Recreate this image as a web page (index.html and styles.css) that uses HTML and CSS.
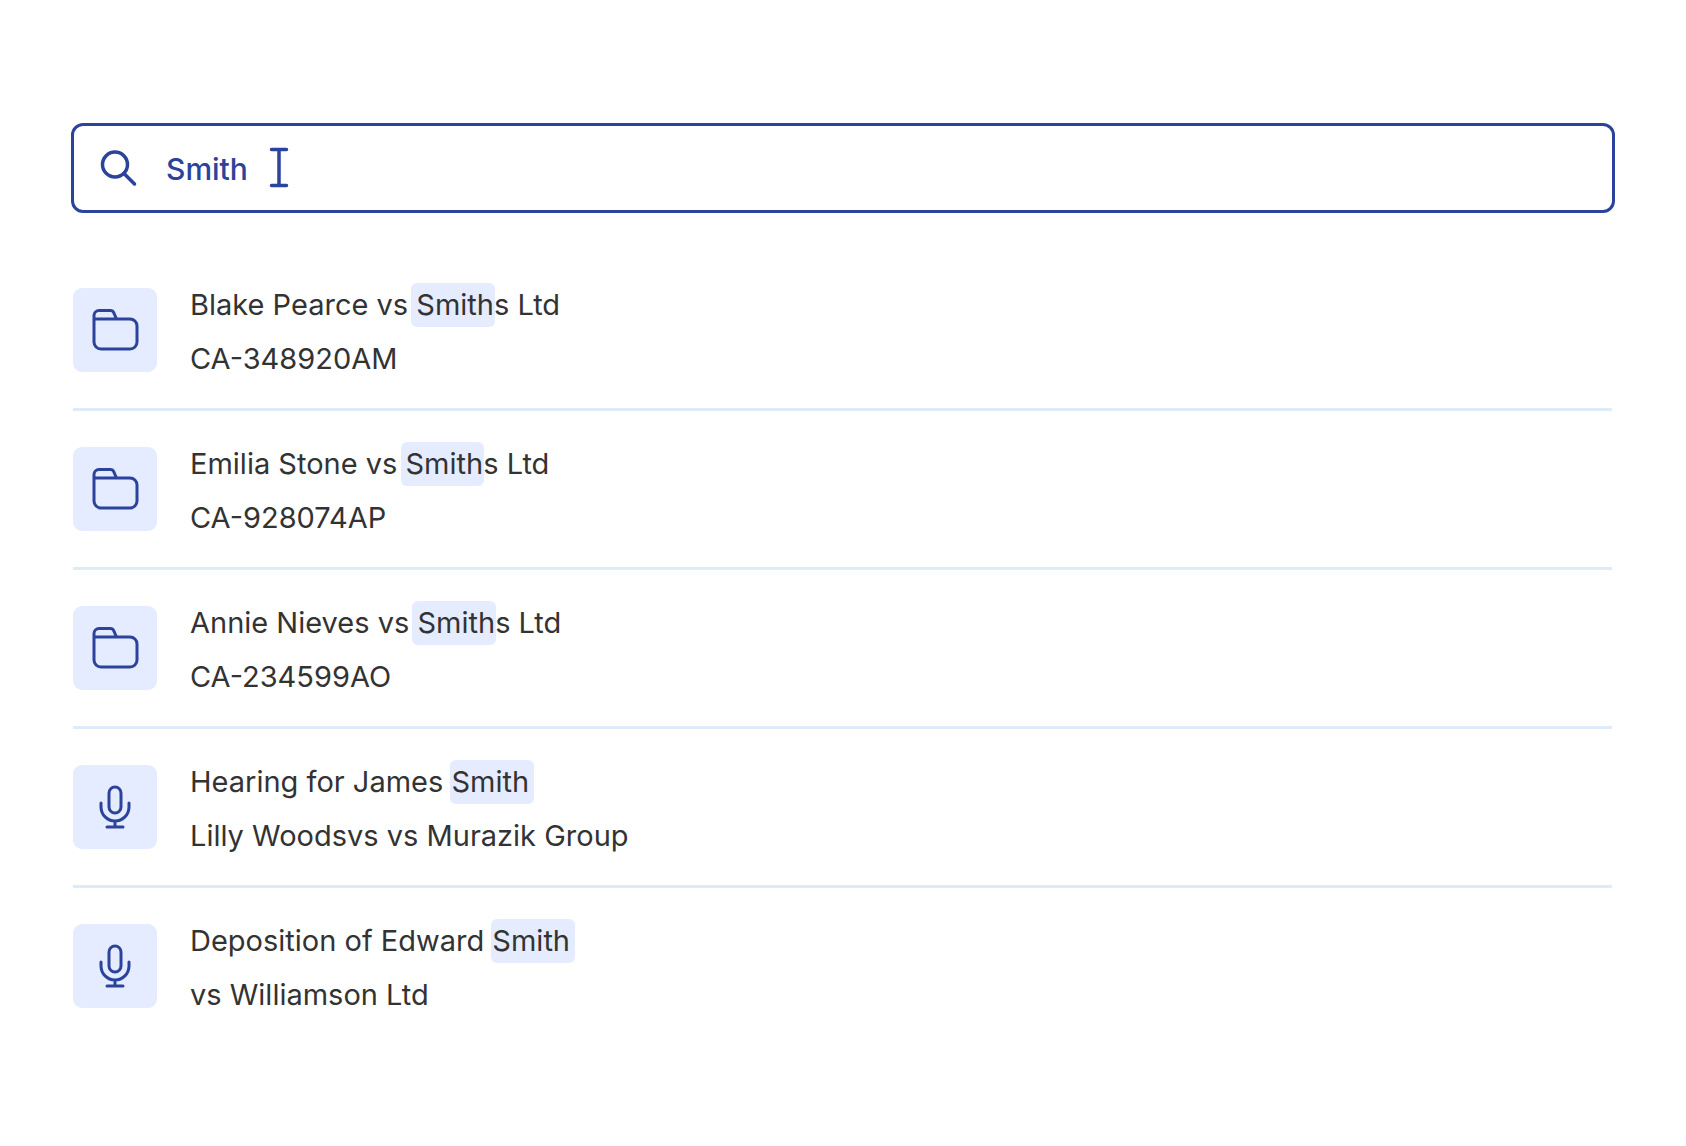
FILE: index.html
```html
<!DOCTYPE html>
<html lang="en">
<head>
  <meta charset="utf-8">
  <meta name="viewport" content="width=device-width, initial-scale=1">
  <title>Case search</title>
  <link rel="stylesheet" href="styles.css">
</head>
<body>
  <svg class="sprite" aria-hidden="true">
    <symbol id="icon-folder" viewBox="0 0 84 84">
      <path d="M21 31V27.500a5 5 0 0 1 5-5H37.500a3.500 3.500 0 0 1 3.200 2.100L43.500 31M21 31H57a7 7 0 0 1 7 7V54a7 7 0 0 1-7 7H28a7 7 0 0 1-7-7Z"/>
    </symbol>
    <symbol id="icon-mic" viewBox="0 0 84 84">
      <rect x="36" y="22" width="12" height="26" rx="6"/>
      <path d="M28 38V42a14 14 0 0 0 28 0V38M42 56V62M34 62H50"/>
    </symbol>
  </svg>

  <main class="page">
    <form class="search" role="search">
      <label class="search-label" for="query">
        <svg class="search-icon" viewBox="0 0 38 38" role="img" aria-label="Search">
          <circle cx="15" cy="15.500" r="12.500"/>
          <path d="M24 24.500L34.500 35"/>
        </svg>
      </label>
      <input class="search-input" id="query" type="text" value="Smith" autocomplete="off">
      <svg class="cursor" viewBox="0 0 20 42" aria-hidden="true">
        <path d="M2.500 2.500H17.500M2.500 38.500H17.500M10 2.500V38.500"/>
      </svg>
    </form>

    <ul class="results">
      <li class="result">
        <span class="tile"><svg class="icon" aria-hidden="true"><use href="#icon-folder"/></svg></span>
        <div class="text">
          <p class="line">Blake Pearce vs <mark class="hit hit-part">Smith</mark>s Ltd</p>
          <p class="line">CA-348920AM</p>
        </div>
      </li>
      <li class="result">
        <span class="tile"><svg class="icon" aria-hidden="true"><use href="#icon-folder"/></svg></span>
        <div class="text">
          <p class="line">Emilia Stone vs <mark class="hit hit-part">Smith</mark>s Ltd</p>
          <p class="line">CA-928074AP</p>
        </div>
      </li>
      <li class="result">
        <span class="tile"><svg class="icon" aria-hidden="true"><use href="#icon-folder"/></svg></span>
        <div class="text">
          <p class="line">Annie Nieves vs <mark class="hit hit-part">Smith</mark>s Ltd</p>
          <p class="line">CA-234599AO</p>
        </div>
      </li>
      <li class="result">
        <span class="tile"><svg class="icon" aria-hidden="true"><use href="#icon-mic"/></svg></span>
        <div class="text">
          <p class="line">Hearing for James <mark class="hit">Smith</mark></p>
          <p class="line">Lilly Woodsvs vs Murazik Group</p>
        </div>
      </li>
      <li class="result">
        <span class="tile"><svg class="icon" aria-hidden="true"><use href="#icon-mic"/></svg></span>
        <div class="text">
          <p class="line">Deposition of Edward <mark class="hit">Smith</mark></p>
          <p class="line">vs Williamson Ltd</p>
        </div>
      </li>
    </ul>
  </main>
</body>
</html>
```
FILE: styles.css
```css
:root {
  --blue: #2b439b;
  --tint: #e5ecff;
  --rule: #deebf9;
  --ink: #333333;
}

* {
  box-sizing: border-box;
}

body {
  margin: 0;
  background: #ffffff;
  color: var(--ink);
  font: 400 29px/54px Inter, "Liberation Sans", sans-serif;
}

.sprite {
  position: absolute;
  width: 0;
  height: 0;
}

.page {
  padding: 123px 71px;
}

.search {
  position: relative;
  display: flex;
  align-items: center;
  gap: 28px;
  height: 90px;
  padding: 0 26px;
  border: 3px solid var(--blue);
  border-radius: 12px;
}

.search-label {
  display: flex;
}

.search-icon,
.cursor,
.icon {
  fill: none;
  stroke: var(--blue);
  stroke-width: 3;
  stroke-linecap: round;
  stroke-linejoin: round;
}

.search-icon {
  width: 38px;
  height: 38px;
  stroke-width: 3.500;
}

.search-input {
  flex: 1;
  min-width: 0;
  padding: 2px 0 0;
  border: 0;
  outline: 0;
  background: none;
  color: var(--blue);
  font: inherit;
  font-size: 30px;
  font-weight: 500;
}

/* Text pointer hovering over the field */
.cursor {
  position: absolute;
  top: 21px;
  left: 195px;
  width: 20px;
  height: 42px;
  stroke-width: 3.500;
}

.results {
  margin: 39px 3px 0 2px;
  padding: 0;
  list-style: none;
}

.result {
  display: flex;
  align-items: center;
  gap: 33px;
  padding: 26px 0 22px;
}

.result:not(:last-child) {
  border-bottom: 3px solid var(--rule);
}

.tile {
  flex: none;
  width: 84px;
  height: 84px;
  margin-bottom: 4px;
  border-radius: 9px;
  background: var(--tint);
}

.icon {
  display: block;
  width: 84px;
  height: 84px;
}

.line {
  margin: 0;
}

.hit {
  margin: 0 -5px 0 -1px;
  padding: 4px 5px 5px 1px;
  border-radius: 6px;
  background: var(--tint);
  color: inherit;
}

.hit-part {
  margin: 0 -1px 0 -5px;
  padding: 4px 1px 5px 5px;
}
```
